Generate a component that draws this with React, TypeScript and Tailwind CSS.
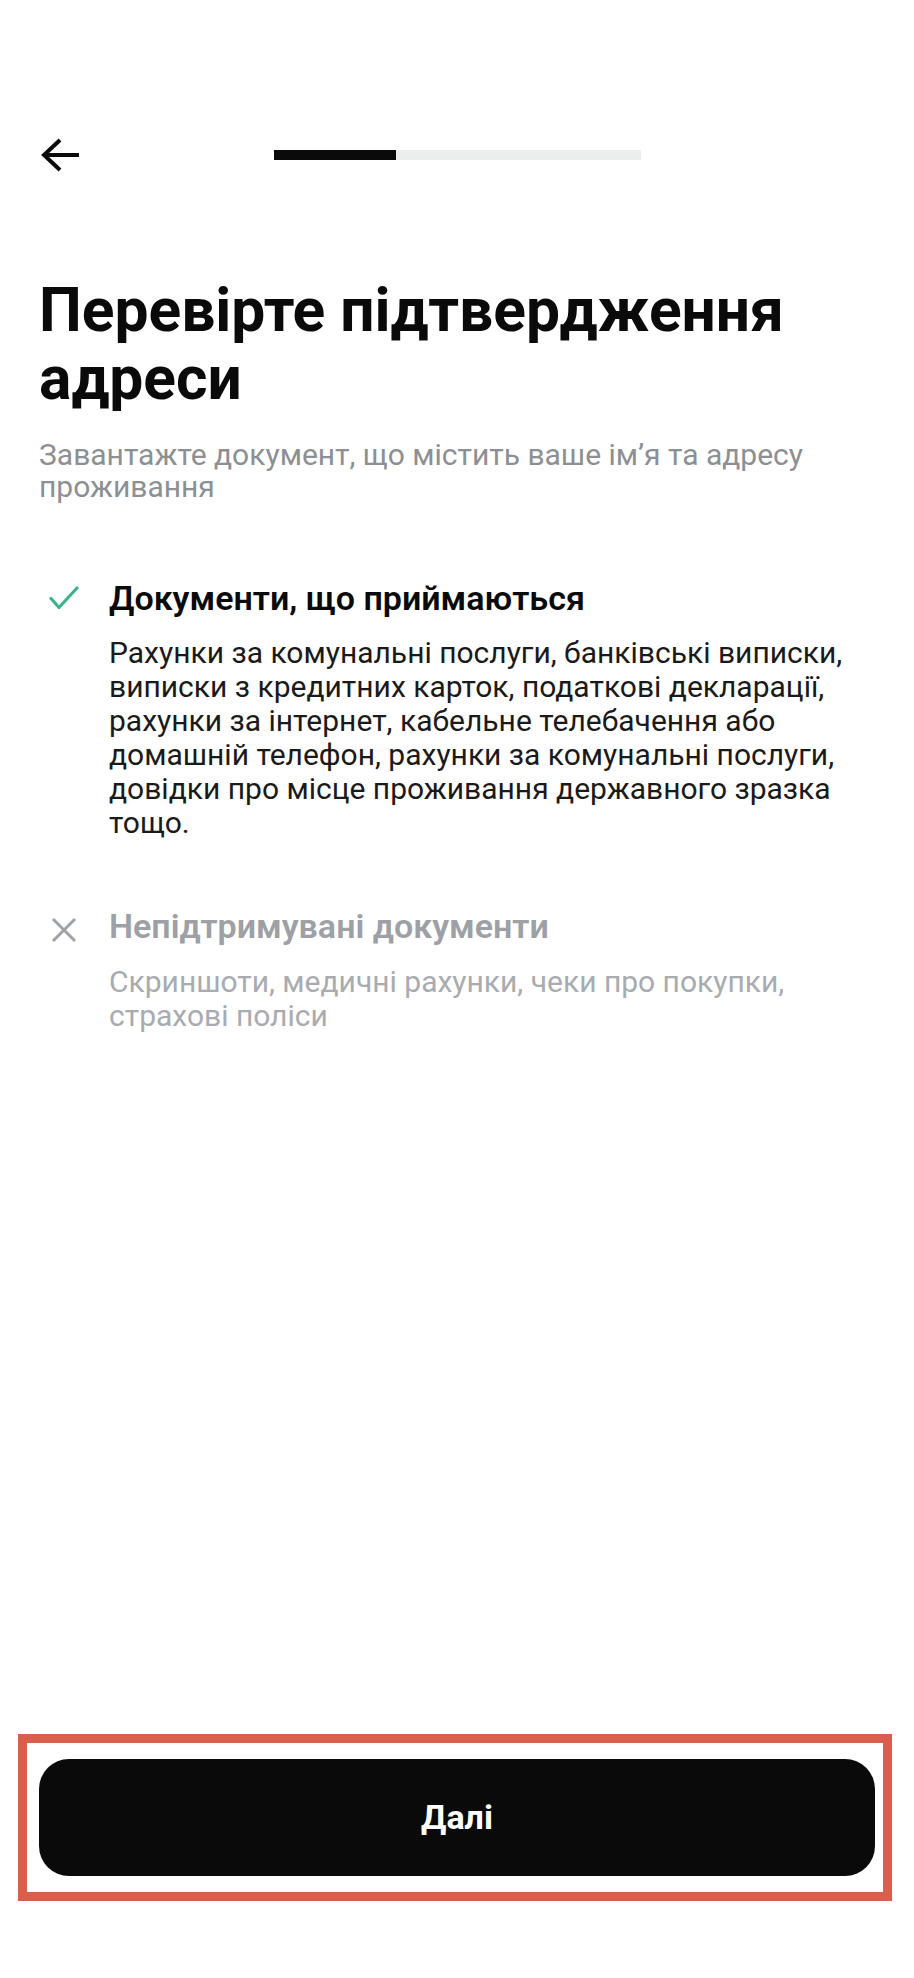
const ACCEPTED =
  "Рахунки за комунальні послуги, банківські виписки, виписки з кредитних карток, податкові декларації, рахунки за інтернет, кабельне телебачення або домашній телефон, рахунки за комунальні послуги, довідки про місце проживання державного зразка тощо.";

const REJECTED = "Скриншоти, медичні рахунки, чеки про покупки, страхові поліси";

function BackArrow() {
  return (
    <svg width="40" height="34" viewBox="0 0 40 34" fill="none">
      <path d="M39 17H4" stroke="#0a0a0a" strokeWidth="4" />
      <path d="M20 2L4 17l16 15" stroke="#0a0a0a" strokeWidth="4" strokeLinejoin="miter" />
    </svg>
  );
}

function Check() {
  return (
    <svg width="30" height="24" viewBox="0 0 30 24" fill="none">
      <path d="M2 12.5l8 9L28 2" stroke="#3db58a" strokeWidth="3.2" strokeLinecap="round" strokeLinejoin="round" />
    </svg>
  );
}

function Cross() {
  return (
    <svg width="26" height="26" viewBox="0 0 26 26" fill="none">
      <path d="M2 2l22 22M24 2L2 24" stroke="#9ea1a5" strokeWidth="3" />
    </svg>
  );
}

export default function App() {
  return (
    <div className="h-[1978px] w-full bg-white flex flex-col font-['Roboto','Noto_Sans',sans-serif]">
      {/* header */}
      <div className="pt-[127px] px-[40px]">
        <div className="h-[56px] grid grid-cols-[1fr_367px_1fr] items-center">
          <div className="flex items-center">
            <BackArrow />
          </div>
          <div className="h-[10px] bg-[#eceeee] flex">
            <div className="w-[122px] h-full bg-[#0a0a0a]" />
          </div>
          <div />
        </div>
      </div>

      {/* content */}
      <div className="px-[39px] pt-[94px]">
        <h1 className="text-[60.5px] leading-[68px] font-bold text-[#0a0a0a]">
          Перевірте підтвердження адреси
        </h1>
        <p className="mt-[26px] text-[30px] leading-[32px] text-[#8c8f94]">
          Завантажте документ, що містить ваше ім’я та адресу проживання
        </p>

        <div className="mt-[77px] flex">
          <div className="w-[50px] h-[36px] flex items-center justify-center shrink-0">
            <Check />
          </div>
          <div className="ml-[20px]">
            <p className="text-[34px] leading-[36px] font-semibold text-[#0a0a0a]">
              Документи, що приймаються
            </p>
            <p className="mt-[20px] text-[30px] leading-[34px] text-[#1a1a1a]">{ACCEPTED}</p>
          </div>
        </div>

        <div className="mt-[68px] flex">
          <div className="w-[50px] h-[36px] mt-[4px] flex items-center justify-center shrink-0">
            <Cross />
          </div>
          <div className="ml-[20px]">
            <p className="text-[34px] leading-[36px] font-semibold text-[#9da0a4]">
              Непідтримувані документи
            </p>
            <p className="mt-[21px] text-[30px] leading-[34px] text-[#a8abaf]">{REJECTED}</p>
          </div>
        </div>
      </div>

      <div className="flex-1" />

      {/* footer */}
      <div className="ml-[18px] mr-[22px] mb-[77px] border-[9px] border-[#d95f4c] pt-[16px] pb-[16px] pl-[12px] pr-[8px]">
        <button className="w-full h-[117px] rounded-[30px] bg-[#0a0a0a] text-white text-[34px] font-bold flex items-center justify-center">
          Далі
        </button>
      </div>
    </div>
  );
}
